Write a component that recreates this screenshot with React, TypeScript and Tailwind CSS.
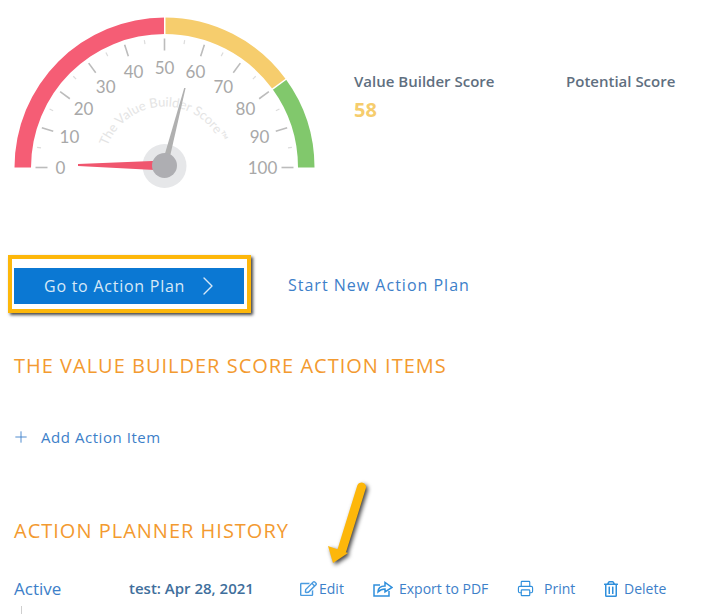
import { FaRegEdit, FaRegTrashAlt } from "react-icons/fa";
import { Printer, ChevronRight, Plus } from "lucide-react";

const CX = 164.5;
const CY = 167.5;

const point = (r: number, value: number) => {
  const a = Math.PI - (value / 100) * Math.PI;
  return [CX + r * Math.cos(a), CY - r * Math.sin(a)];
};

const band = (from: number, to: number) => {
  const [x1, y1] = point(150, from);
  const [x2, y2] = point(150, to);
  const [x3, y3] = point(133.5, to);
  const [x4, y4] = point(133.5, from);
  return `M${x1} ${y1}A150 150 0 0 1 ${x2} ${y2}L${x3} ${y3}A133.5 133.5 0 0 0 ${x4} ${y4}Z`;
};

const ticks = Array.from({ length: 21 }, (_, i) => i * 5);
const labels = [0, 10, 20, 30, 40, 50, 60, 70, 80, 90, 100];

const Gauge = () => {
  const [nx, ny] = point(82, 58);
  return (
    <svg width="330" height="200" viewBox="0 0 330 200" className="shrink-0">
      <defs>
        <path id="scoreArc" d={`M${CX - 61} ${CY}A61 61 0 0 1 ${CX + 61} ${CY}`} />
      </defs>
      <path d={band(0, 50)} fill="#f55d75" />
      <path d={band(50, 80)} fill="#f6cd6d" />
      <path d={band(80, 100)} fill="#81c86c" />
      <rect x={CX - 0.5} y="17" width="1.5" height="18" fill="#fff" />
      <line {...{ x1: point(151, 80)[0], y1: point(151, 80)[1], x2: point(133, 80)[0], y2: point(133, 80)[1] }} stroke="#fff" strokeWidth="1.5" />
      {ticks.map((t) => {
        const major = t % 10 === 0;
        const [x1, y1] = point(129, t);
        const [x2, y2] = point(major ? 117 : 125, t);
        return (
          <line
            key={t}
            x1={x1}
            y1={y1}
            x2={x2}
            y2={y2}
            stroke={major ? "#bcbcbc" : "#dcdcdc"}
            strokeWidth={major ? 1.6 : 1.2}
          />
        );
      })}
      {labels.map((l) => {
        const r = l === 0 ? 104 : l === 100 ? 98 : 100;
        const [x, y] = point(r, l);
        return (
          <text
            key={l}
            x={x}
            y={y + 6}
            textAnchor="middle"
            fill="#a8a8a8"
            className="font-['Lato',sans-serif] text-[17px]"
          >
            {l}
          </text>
        );
      })}
      <text fill="#e4e4e4" className="font-['Lato',sans-serif] text-[13px]">
        <textPath href="#scoreArc" startOffset="49%" textAnchor="middle">
          The Value Builder Score™
        </textPath>
      </text>
      <circle cx={CX} cy={CY - 1.5} r="22" fill="#e6e7e9" />
      <path d={`M${CX - 3} ${CY - 2}L${nx - 0.7} ${ny}L${nx + 0.7} ${ny}L${CX + 3} ${CY}Z`} fill="#b0b0b0" />
      <path d={`M78 164L${CX} ${CY - 7}L${CX} ${CY + 3}L78 166Z`} fill="#f0566e" />
      <circle cx={CX} cy={CY - 2} r="12.5" fill="#aeaeb2" />
    </svg>
  );
};

const Arrow = () => (
  <svg
    width="60"
    height="100"
    viewBox="0 0 60 100"
    className="absolute left-[320px] top-[474px] drop-shadow-[2px_2px_2px_rgba(0,0,0,0.75)]"
  >
    <path d="M41.5 13L22 76" stroke="#fdb70a" strokeWidth="9" strokeLinecap="round" />
    <path d="M8 72L13 89L28 79Z" fill="#fdb70a" />
  </svg>
);

const ExportIcon = () => (
  <svg width="20" height="16" viewBox="0 0 20 16" fill="none" stroke="#2f8fdc" strokeWidth="1.5" className="mr-[6px]">
    <path d="M7 4H1V15H16V10" />
    <path d="M5 11C5 7 8 5 12 5V1.5L19 6.5L12 11V8C9 8 7 9 5 11Z" />
  </svg>
);

const Action = ({ icon, label, className }: { icon: React.ReactNode; label: string; className: string }) => (
  <div className={`flex items-center text-[14px] text-[#3d80c9] ${className}`}>
    {icon}
    <span>{label}</span>
  </div>
);

export default function App() {
  return (
    <div className="relative w-[721px] h-[614px] overflow-hidden bg-white font-['Open_Sans',sans-serif]">
      <div className="flex">
        <Gauge />
        <div className="flex pl-[24px] pt-[71px]">
          <div className="w-[212px]">
            <div className="text-[15px] font-semibold leading-[20px] text-[#5f6f80]">Value Builder Score</div>
            <div className="mt-[5px] text-[20px] font-bold leading-[28px] text-[#f6cd6d]">58</div>
          </div>
          <div className="text-[15px] font-semibold leading-[20px] text-[#5f6f80]">Potential Score</div>
        </div>
      </div>

      <div className="mt-[55px] ml-[8px] flex items-center">
        <div className="w-[243px] h-[58px] border-[4px] border-[#fdb70a] bg-white pl-[2px] pr-[3px] pt-[9px] shadow-[2px_2px_3px_#444]">
          <div className="flex h-[36px] items-center bg-[#0b78d3] pl-[30px] text-[16px] tracking-[0.75px] text-[#d7e8f7]">
            <span>Go to Action Plan</span>
            <ChevronRight className="ml-[7px] h-[32px] w-[32px]" strokeWidth={1} />
          </div>
        </div>
        <span className="ml-[37px] pt-[2px] text-[16px] tracking-[1px] text-[#3d80c9]">Start New Action Plan</span>
      </div>

      <h2 className="mt-[41px] ml-[14px] text-[20px] leading-[24px] tracking-[1px] text-[#f39a30]">
        THE VALUE BUILDER SCORE ACTION ITEMS
      </h2>

      <div className="mt-[48px] ml-[12px] flex items-center text-[15px] tracking-[0.55px] text-[#3d80c9]">
        <Plus className="h-[18px] w-[18px]" strokeWidth={1.2} />
        <span className="ml-[11px]">Add Action Item</span>
      </div>

      <h2 className="mt-[70px] ml-[14px] text-[20px] leading-[24px] tracking-[1px] text-[#f39a30]">
        ACTION PLANNER HISTORY
      </h2>

      <div className="mt-[36px] ml-[14px] flex h-[20px] items-center">
        <span className="w-[115px] text-[17px] text-[#3d80c9]">Active</span>
        <span className="w-[171px] text-[15px] font-semibold text-[#3f6f9c]">test: Apr 28, 2021</span>
        <Action className="w-[73px]" icon={<FaRegEdit className="mr-[2px] h-[17px] w-[17px] text-[#4a9be0]" />} label="Edit" />
        <Action className="w-[144px]" icon={<ExportIcon />} label="Export to PDF" />
        <Action className="w-[87px]" icon={<Printer className="mr-[10px] h-[17px] w-[17px] text-[#2f8fdc]" strokeWidth={1.6} />} label="Print" />
        <Action className="" icon={<FaRegTrashAlt className="mr-[6px] h-[16px] w-[14px] text-[#2f8fdc]" />} label="Delete" />
      </div>

      <div className="mt-[7px] ml-[21px] h-[10px] w-px bg-[#cfcfcf]" />
      <Arrow />
    </div>
  );
}
